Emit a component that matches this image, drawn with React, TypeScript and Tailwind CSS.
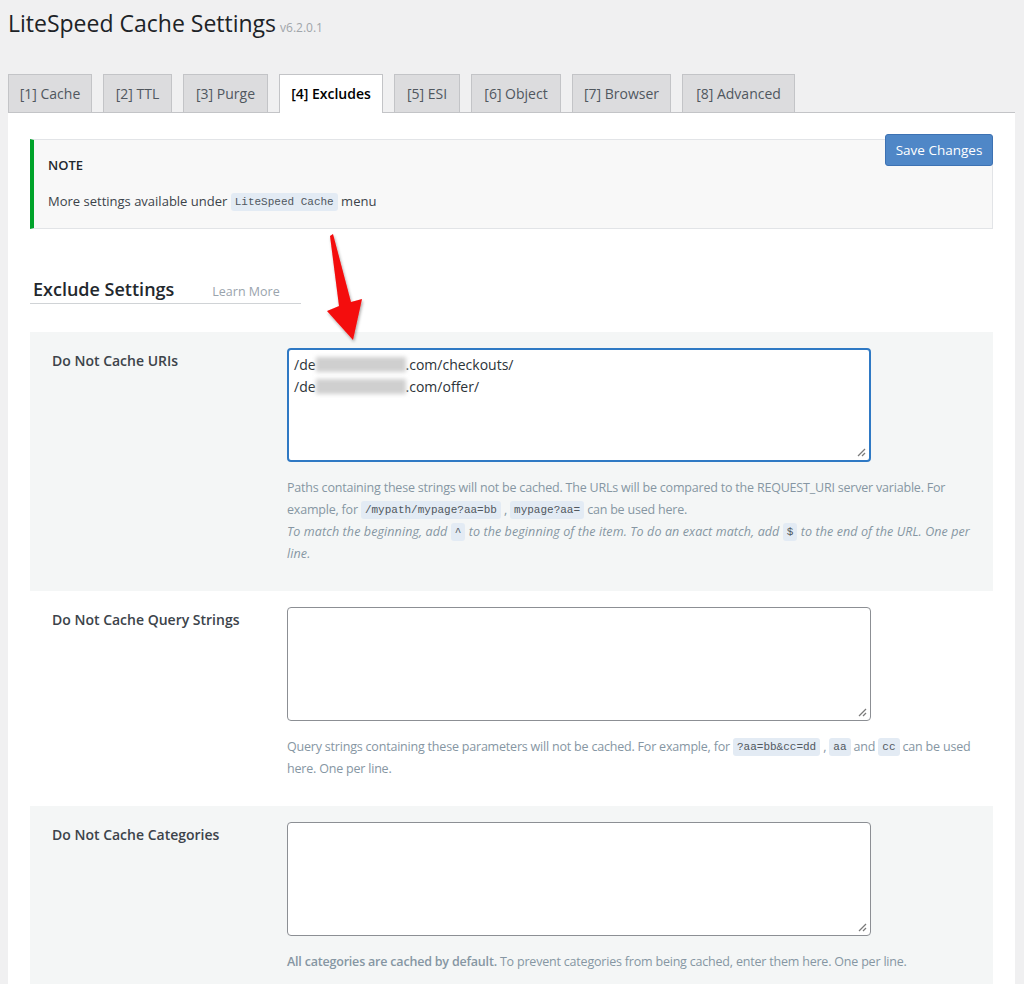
import React from "react";

const tabs: [string, number][] = [
  ["[1] Cache", 84],
  ["[2] TTL", 69],
  ["[3] Purge", 85],
  ["[4] Excludes", 104],
  ["[5] ESI", 66],
  ["[6] Object", 90],
  ["[7] Browser", 99],
  ["[8] Advanced", 113],
];

function Code({ children }: { children: React.ReactNode }) {
  return (
    <code className="inline-block rounded-[3px] bg-[#e3ebf4] px-[4px] font-['Liberation_Mono',monospace] text-[11px] leading-[18px] not-italic tracking-normal text-[#50575e] align-[1px]">
      {children}
    </code>
  );
}

function Resize() {
  return (
    <svg className="absolute bottom-[3px] right-[3px]" width="9" height="9" viewBox="0 0 9 9">
      <line x1="1" y1="8" x2="8" y2="1" stroke="#7a7a7a" strokeWidth="1.2" />
      <line x1="5" y1="8" x2="8" y2="5" stroke="#7a7a7a" strokeWidth="1.2" />
    </svg>
  );
}

function Blur({ w }: { w: number }) {
  return <span className="inline-block h-[15px] bg-[#cfcfcf] blur-[2px] align-[-2px]" style={{ width: w }} />;
}

function Row({
  label,
  grey,
  focused,
  children,
  desc,
}: {
  label: string;
  grey?: boolean;
  focused?: boolean;
  children?: React.ReactNode;
  desc: React.ReactNode;
}) {
  return (
    <div className={`flex pl-[22px] pr-[8px] pt-[16px] pb-[26px] ${grey ? "bg-[#f4f6f6]" : "bg-white"}`}>
      <div className="w-[235px] shrink-0 pt-[3px] text-[14px] leading-[20px] font-semibold text-[#3c434a]">{label}</div>
      <div className="flex-1">
        <div
          className={`relative h-[114px] w-[584px] rounded-[4px] bg-white px-[5px] py-[4px] text-[14px] leading-[22px] text-[#2c3338] ${
            focused ? "border-2 border-[#2f79c4]" : "border border-[#8c8f94]"
          }`}
        >
          {children}
          <Resize />
        </div>
        <div className="mt-[15px] text-[12.5px] leading-[22px] tracking-[-0.2px] text-[#8696a3]">{desc}</div>
      </div>
    </div>
  );
}

export default function App() {
  return (
    <div className="relative h-[984px] w-full overflow-hidden bg-[#f0f0f1] pl-[8px] font-['Open_Sans',sans-serif] text-[#1d2327]">
      <div className="pt-[7px] flex items-baseline gap-[4px]">
        <h1 className="text-[23px] leading-[32px] font-normal text-[#1d2327]">LiteSpeed Cache Settings</h1>
        <span className="text-[12px] text-[#a0a5aa]">v6.2.0.1</span>
      </div>

      <div className="mt-[35px] flex gap-[11px]">
        {tabs.map(([t, w], i) =>
          i === 3 ? (
            <div
              key={t}
              style={{ width: w }}
              className="relative z-10 -mb-px h-[39px] border border-b-0 border-[#c3c4c7] bg-white text-center text-[14px] font-semibold leading-[38px] text-[#000]"
            >
              {t}
            </div>
          ) : (
            <div
              key={t}
              style={{ width: w }}
              className="h-[38px] border border-b-0 border-[#c3c4c7] bg-[#dcdcde] text-center text-[14px] font-medium leading-[38px] text-[#50575e]"
            >
              {t}
            </div>
          )
        )}
      </div>

      <div className="relative w-[1007px] border-t border-[#c3c4c7] bg-white px-[22px] pt-[26px]">
        <div className="border border-l-4 border-[#e2e4e7] border-l-[#00a32a] bg-[#f8f8f8] pl-[14px] pt-[15px] pb-[17px]">
          <div className="text-[13px] font-semibold leading-[20px] text-[#23282d]">NOTE</div>
          <div className="mt-[16px] text-[13px] leading-[20px] text-[#3c434a]">
            More settings available under <Code>LiteSpeed Cache</Code> menu
          </div>
        </div>
        <button className="absolute right-[22px] top-[21px] h-[32px] w-[108px] rounded-[3px] border border-[#3d72b3] bg-[#4f87c7] text-[13.5px] text-white">
          Save Changes
        </button>

        <div className="mt-[48px] inline-flex items-baseline border-b border-[#d0d3d6] pl-[3px] pr-[21px] pb-[1px]">
          <span className="text-[18px] font-semibold leading-[24px] text-[#23282d]">Exclude Settings</span>
          <span className="ml-[38px] text-[12.5px] text-[#9aa4ad]">Learn More</span>
        </div>

        <div className="mt-[28px]">
          <Row
            label="Do Not Cache URIs"
            grey
            focused
            desc={
              <>
                <div>
                  Paths containing these strings will not be cached. The URLs will be compared to the REQUEST_URI server variable. For example, for{" "}
                  <Code>/mypath/mypage?aa=bb</Code> , <Code>mypage?aa=</Code> can be used here.
                </div>
                <div className="italic tracking-[0.1px]">
                  To match the beginning, add <Code>^</Code> to the beginning of the item. To do an exact match, add <Code>$</Code> to the end of the URL. One per line.
                </div>
              </>
            }
          >
            <div>
              /de<Blur w={90} />.com/checkouts/
            </div>
            <div>
              /de<Blur w={90} />.com/offer/
            </div>
          </Row>
          <Row
            label="Do Not Cache Query Strings"
            desc={
              <div>
                Query strings containing these parameters will not be cached. For example, for <Code>?aa=bb&amp;cc=dd</Code> , <Code>aa</Code> and{" "}
                <Code>cc</Code> can be used here. One per line.
              </div>
            }
          />
          <Row
            label="Do Not Cache Categories"
            grey
            desc={
              <div>
                <span className="font-semibold">All categories are cached by default.</span> To prevent categories from being cached, enter them here. One per line.
              </div>
            }
          />
        </div>
      </div>

      <svg className="absolute left-[320px] top-[228px]" width="60" height="120" viewBox="320 228 60 120">
        <defs>
          <filter id="sh" x="-50%" y="-50%" width="200%" height="200%">
            <feDropShadow dx="1" dy="2" stdDeviation="1.5" floodColor="#000" floodOpacity="0.35" />
          </filter>
        </defs>
        <polygon points="330,236 333,234 351,302 362,299 353,340 327,311 339,306" fill="#f40a0a" filter="url(#sh)" />
      </svg>
    </div>
  );
}
